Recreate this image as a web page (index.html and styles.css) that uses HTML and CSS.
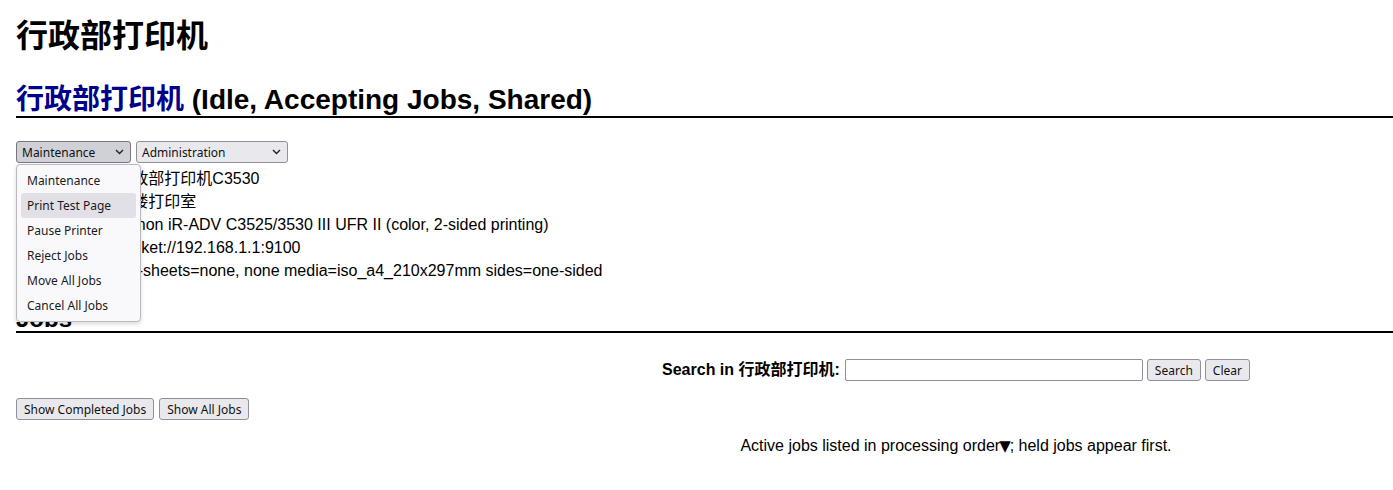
FILE: index.html
```html
<!DOCTYPE html>
<html lang="zh-CN">
<head>
    <meta charset="UTF-8">
    <title>行政部打印机 - CUPS</title>
    <link rel="stylesheet" href="styles.css">
</head>
<body>
    <div class="page">
        <h1>行政部打印机</h1>

        <h2 class="title printer-title"><a href="#">行政部打印机</a> (Idle, Accepting Jobs, Shared)</h2>

        <!-- Printer actions -->
        <form class="actions">
            <div class="select-wrap">
                <div class="select select-open">
                    <span>Maintenance</span>
                    <svg class="chevron" width="9" height="6" viewBox="0 0 9 6"><path d="M1 1l3.5 3.5L8 1" fill="none" stroke="#222" stroke-width="1.4"/></svg>
                </div>
                <ul class="menu">
                    <li>Maintenance</li>
                    <li class="active">Print Test Page</li>
                    <li>Pause Printer</li>
                    <li>Reject Jobs</li>
                    <li>Move All Jobs</li>
                    <li>Cancel All Jobs</li>
                </ul>
            </div>
            <div class="select select-admin">
                <span>Administration</span>
                <svg class="chevron" width="9" height="6" viewBox="0 0 9 6"><path d="M1 1l3.5 3.5L8 1" fill="none" stroke="#222" stroke-width="1.4"/></svg>
            </div>
        </form>

        <!-- Printer details -->
        <table class="info">
            <tr><th>Description:</th><td>行政部打印机C3530</td></tr>
            <tr><th>Location:</th><td>三楼打印室</td></tr>
            <tr><th>Driver:</th><td>Canon iR-ADV C3525/3530 III UFR II (color, 2-sided printing)</td></tr>
            <tr><th>Connection:</th><td>socket://192.168.1.1:9100</td></tr>
            <tr><th>Defaults:</th><td>job-sheets=none, none media=iso_a4_210x297mm sides=one-sided</td></tr>
        </table>

        <h2 class="title jobs-title">Jobs</h2>

        <form class="search">
            <b>Search in 行政部打印机:</b>
            <input type="search" class="search-input">
            <button type="button">Search</button>
            <button type="button">Clear</button>
        </form>

        <form class="show">
            <button type="button">Show Completed Jobs</button>
            <button type="button">Show All Jobs</button>
        </form>

        <p class="order">Active jobs listed in processing order<span class="arrow">&#9660;</span>; held jobs appear first.</p>
    </div>
</body>
</html>
```

FILE: styles.css
```css
/* General Styles */
html, body {
    overflow: hidden;
}

body {
    margin: 0;
    background: #fff;
    color: #000;
    font-family: "Liberation Sans", Arial, "Noto Sans CJK SC", sans-serif;
    font-size: 16px;
}

.page {
    width: 1880px;
    padding-left: 16px;
}

h1 {
    font-size: 32px;
    line-height: 37px;
    margin: 18px 0 0;
}

h2.title {
    margin: 0;
    border-bottom: 2px solid #000;
}

h2.printer-title {
    font-size: 28px;
    line-height: 32px;
    margin-top: 29px;
}

h2.jobs-title {
    font-size: 24px;
    line-height: 24px;
    margin-top: 24px;
}

h2.title a {
    color: #00008b;
    text-decoration: none;
}

/* Fake select boxes, first one shown open */
.actions {
    display: flex;
    gap: 5px;
    margin-top: 23px;
}

.select-wrap {
    position: relative;
}

.select {
    display: flex;
    align-items: center;
    justify-content: space-between;
    box-sizing: border-box;
    height: 22px;
    padding: 0 6px 0 5px;
    border: 1px solid #8f8f9d;
    border-radius: 3px;
    background: #e9e9ed;
    font-family: "Noto Sans", "Open Sans", sans-serif;
    font-size: 12px;
    color: #111;
}

.select-open {
    width: 115px;
    background: #d0d0d7;
    border-color: #76767e;
}

.select-admin {
    width: 152px;
}

.menu {
    position: absolute;
    top: 23px;
    left: 0;
    z-index: 2;
    width: 125px;
    box-sizing: border-box;
    margin: 0;
    padding: 3px 4px;
    list-style: none;
    background: #f9f9fb;
    border: 1px solid #b9b9c0;
    border-radius: 4px;
    box-shadow: 0 2px 4px rgba(0, 0, 0, 0.15);
    font-family: "Noto Sans", "Open Sans", sans-serif;
    font-size: 12px;
    color: #1b1b1b;
}

.menu li {
    height: 25px;
    line-height: 25px;
    padding-left: 6px;
    border-radius: 3px;
}

.menu li.active {
    background: #e0e0e6;
}

/* Printer info table */
.info {
    margin-top: 3px;
    border-spacing: 2px;
}

.info th, .info td {
    padding: 1px;
    line-height: 19px;
    white-space: nowrap;
}

.info th {
    text-align: right;
}

/* Buttons and inputs */
button, .search-input {
    box-sizing: border-box;
    height: 22px;
    font-family: "Noto Sans", "Open Sans", sans-serif;
    color: #111;
}

button {
    padding: 0 7px;
    font-size: 12px;
    background: #e9e9ed;
    border: 1px solid #8f8f9d;
    border-radius: 3px;
}

.search {
    display: flex;
    justify-content: center;
    align-items: center;
    gap: 4px;
    line-height: 22px;
    margin-top: 26px;
}

.search b {
    margin-right: 1px;
}

.search-input {
    width: 298px;
    border: 1px solid #8f8f9d;
    border-radius: 2px;
    background: #fff;
}

.show {
    display: flex;
    gap: 5px;
    margin-top: 17px;
}

.order {
    text-align: center;
    line-height: 18px;
    margin: 17px 0 0;
}

.order .arrow {
    font-family: "DejaVu Sans", sans-serif;
    font-size: 15px;
    margin: 0 -1px;
}
```
